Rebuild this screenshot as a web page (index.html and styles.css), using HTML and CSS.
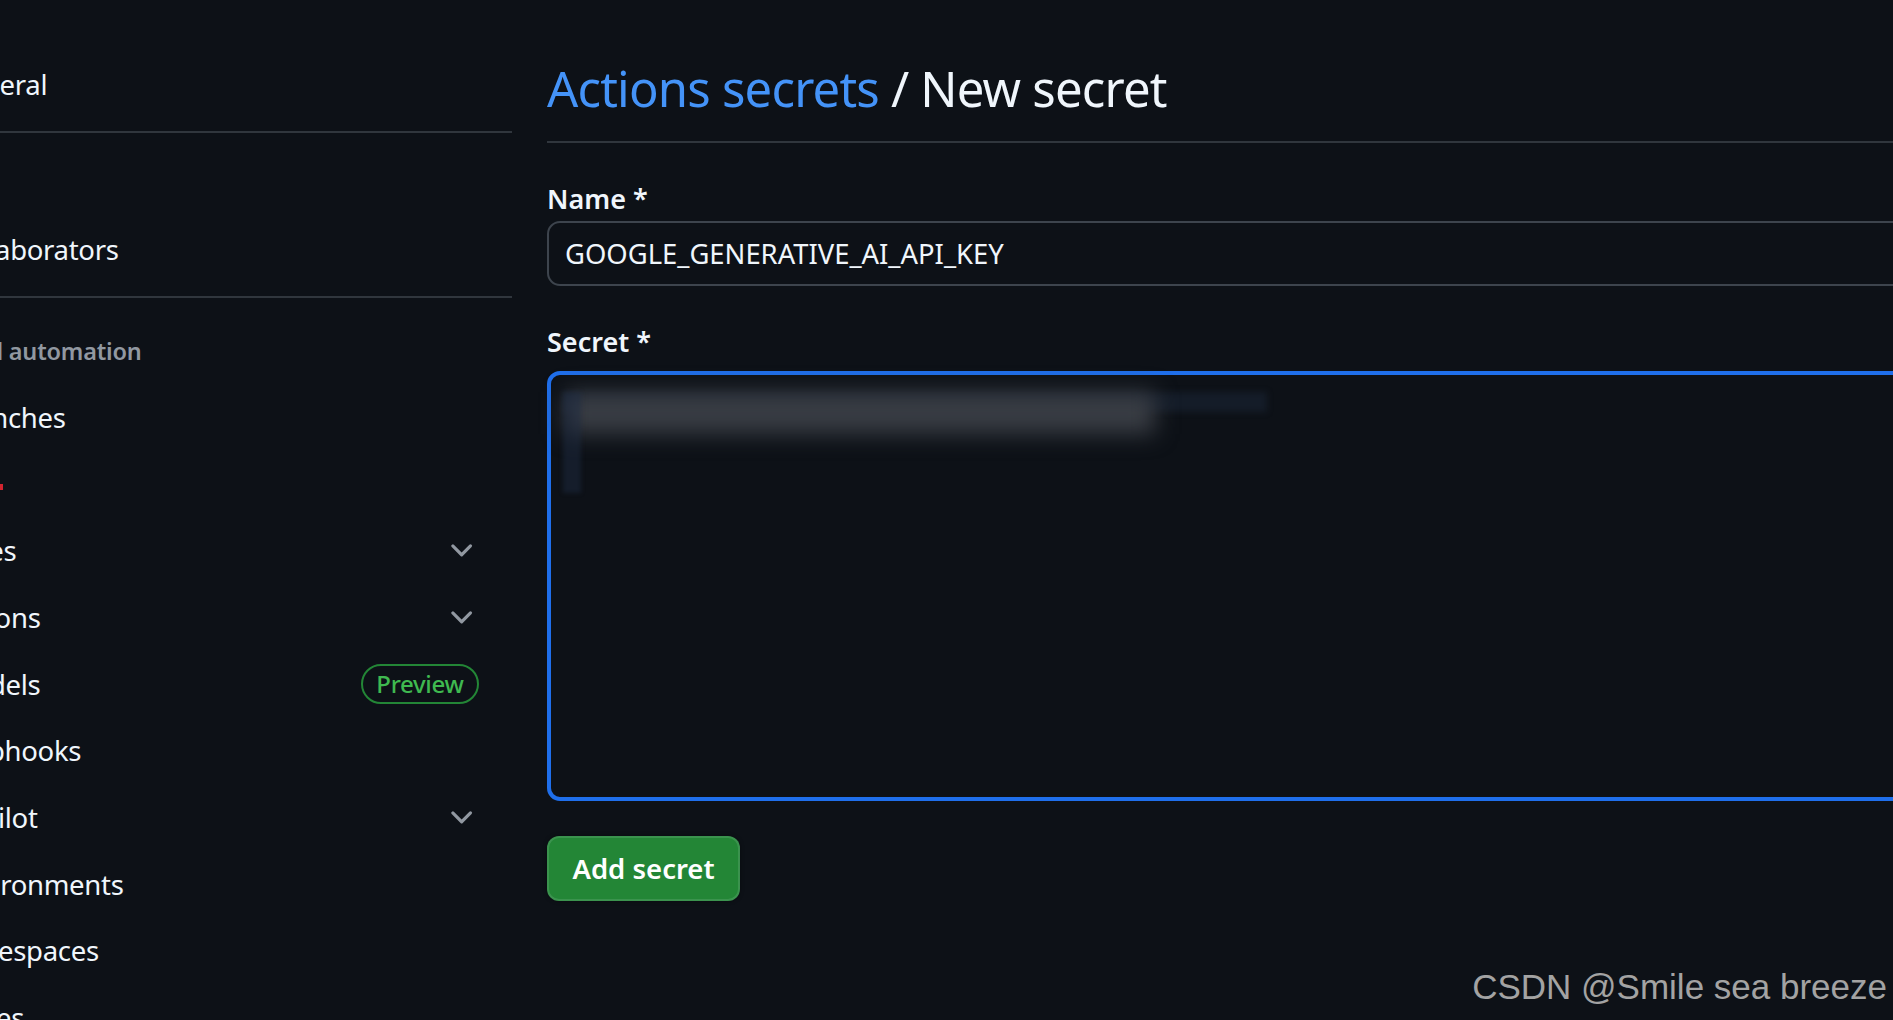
FILE: index.html
```html
<!DOCTYPE html>
<html lang="en">
<head>
<meta charset="utf-8">
<title>Actions secrets / New secret</title>
<link rel="stylesheet" href="styles.css">
</head>
<body>
<div class="page">
  <nav class="sidebar">
    <div class="nav-item"><span class="label">General</span></div>
    <div class="divider"></div>
    <div class="nav-heading">Access</div>
    <div class="nav-item"><span class="label">Collaborators</span></div>
    <div class="divider"></div>
    <div class="nav-heading nav-heading-code">Code and automation</div>
    <div class="nav-item"><span class="label">Branches</span></div>
    <div class="nav-item"><span class="label"><span class="red-mark"></span></span></div>
    <div class="nav-item"><span class="label">Rules</span>
      <svg class="chev" viewBox="0 0 16 16"><path d="M12.78 5.22a.749.749 0 0 1 0 1.06l-4.25 4.25a.749.749 0 0 1-1.06 0L3.22 6.28a.749.749 0 0 1 .326-1.275.749.749 0 0 1 .734.215L8 8.94l3.72-3.72a.749.749 0 0 1 1.06 0Z"/></svg></div>
    <div class="nav-item"><span class="label">Actions</span>
      <svg class="chev" viewBox="0 0 16 16"><path d="M12.78 5.22a.749.749 0 0 1 0 1.06l-4.25 4.25a.749.749 0 0 1-1.06 0L3.22 6.28a.749.749 0 0 1 .326-1.275.749.749 0 0 1 .734.215L8 8.94l3.72-3.72a.749.749 0 0 1 1.06 0Z"/></svg></div>
    <div class="nav-item"><span class="label">Models</span><span class="badge">Preview</span></div>
    <div class="nav-item"><span class="label">Webhooks</span></div>
    <div class="nav-item"><span class="label">Copilot</span>
      <svg class="chev" viewBox="0 0 16 16"><path d="M12.78 5.22a.749.749 0 0 1 0 1.06l-4.25 4.25a.749.749 0 0 1-1.06 0L3.22 6.28a.749.749 0 0 1 .326-1.275.749.749 0 0 1 .734.215L8 8.94l3.72-3.72a.749.749 0 0 1 1.06 0Z"/></svg></div>
    <div class="nav-item"><span class="label">Environments</span></div>
    <div class="nav-item"><span class="label">Codespaces</span></div>
    <div class="nav-item"><span class="label">Pages</span></div>
  </nav>

  <main class="content">
    <h1 class="subhead"><a class="crumb" href="#">Actions secrets</a> / New secret</h1>
    <label class="field-label">Name *</label>
    <div class="text-input">GOOGLE_GENERATIVE_AI_API_KEY</div>
    <label class="field-label secret-label">Secret *</label>
    <div class="textarea">
      <div class="smudge">
        <div class="smudge-band"></div>
        <div class="smudge-text"></div>
        <div class="smudge-strip"></div>
      </div>
    </div>
    <button class="btn-primary">Add secret</button>
  </main>
</div>
<div class="watermark">CSDN @Smile sea breeze</div>
</body>
</html>
```
FILE: styles.css
```css
html, body {
  margin: 0;
  padding: 0;
}
body {
  background: #0d1117;
  color: #f0f6fc;
  font-family: "Noto Sans", "Open Sans", sans-serif;
  overflow: hidden;
  height: 1020px;
  width: 1893px;
  position: relative;
}
.page {
  display: flex;
  height: 1020px;
}

/* Sidebar */
.sidebar {
  flex: none;
  width: 622px;
  margin-left: -110px;
  padding-top: 51.5px;
  box-sizing: border-box;
}
.nav-item {
  height: 66.67px;
  display: flex;
  align-items: center;
  padding-left: 58px;
  padding-right: 33.4px;
  font-size: 27.5px;
  letter-spacing: -0.3px;
  color: #f0f6fc;
  white-space: nowrap;
}
.nav-item .label {
  flex: 1;
  position: relative;
}
.divider {
  height: 2px;
  background: #30363d;
  margin: 12.5px 0;
}
.nav-heading {
  height: 71.5px;
  box-sizing: border-box;
  padding-top: 23px;
  padding-left: 7px;
  font-size: 23.5px;
  letter-spacing: -0.2px;
  line-height: 34px;
  font-weight: 600;
  color: #9198a1;
  white-space: nowrap;
}
.nav-heading-code {
  height: 74px;
  padding-top: 24px;
}
.chev {
  width: 33.3px;
  height: 33.3px;
  fill: #9198a1;
  flex: none;
}
.badge {
  flex: none;
  height: 40px;
  box-sizing: border-box;
  display: inline-flex;
  align-items: center;
  padding: 0 13px;
  border: 2px solid #238636;
  border-radius: 20px;
  color: #3fb950;
  font-size: 24px;
  letter-spacing: -0.3px;
  font-weight: 500;
  line-height: 1;
}
.red-mark {
  display: inline-block;
  width: 3px;
  height: 6px;
  margin-left: 52px;
  background: #d1242f;
  vertical-align: middle;
}

/* Main content */
.content {
  flex: none;
  width: 1500px;
  margin-left: 35px;
}
.subhead {
  margin: 56px 0 0;
  font-size: 49px;
  letter-spacing: -0.8px;
  font-weight: 400;
  line-height: 65px;
  padding-bottom: 20px;
  border-bottom: 2px solid #30363d;
  color: #f0f6fc;
  white-space: nowrap;
}
.crumb {
  color: #4493f8;
  text-decoration: none;
}
.field-label {
  display: block;
  margin-top: 37.6px;
  margin-bottom: 5.4px;
  font-size: 27px;
  font-weight: 600;
  line-height: 35px;
  color: #f0f6fc;
}
.secret-label {
  margin-bottom: 12.4px;
}
.text-input {
  height: 65px;
  box-sizing: border-box;
  border: 2px solid #3d444d;
  border-radius: 13px;
  padding-left: 16px;
  display: flex;
  align-items: center;
  font-size: 27.4px;
  color: #f0f6fc;
  background: #0d1117;
}
.textarea {
  height: 430px;
  box-sizing: border-box;
  border: 4px solid #1f6feb;
  border-radius: 13px;
  padding: 17px 0 0 12px;
  background: #0d1117;
}
.smudge {
  position: relative;
  width: 704px;
  height: 101px;
}
.smudge-band {
  width: 704px;
  height: 20px;
  background: rgba(33, 48, 72, 0.35);
  filter: blur(3px);
}
.smudge-text {
  position: absolute;
  left: 2px;
  top: 0;
  width: 590px;
  height: 42px;
  background: #393d44;
  filter: blur(11px);
}
.smudge-strip {
  position: absolute;
  left: 0;
  top: 0;
  width: 18px;
  height: 101px;
  background: rgba(30, 44, 68, 0.45);
  filter: blur(2px);
}
.btn-primary {
  display: block;
  margin-top: 35px;
  width: 193px;
  height: 65px;
  box-sizing: border-box;
  background: #238636;
  border: 2px solid rgba(240, 246, 252, 0.12);
  border-radius: 12px;
  color: #ffffff;
  font-family: "Noto Sans", "Open Sans", sans-serif;
  font-size: 27.5px;
  font-weight: 600;
  padding: 0;
  box-shadow: 0 0 4px rgba(0, 0, 0, 0.4);
}

/* Watermark overlay */
.watermark {
  position: absolute;
  right: 6px;
  top: 967px;
  font-family: "Liberation Sans", Arial, sans-serif;
  font-size: 35px;
  line-height: 40px;
  color: #a3a3a3;
  white-space: nowrap;
}
```
